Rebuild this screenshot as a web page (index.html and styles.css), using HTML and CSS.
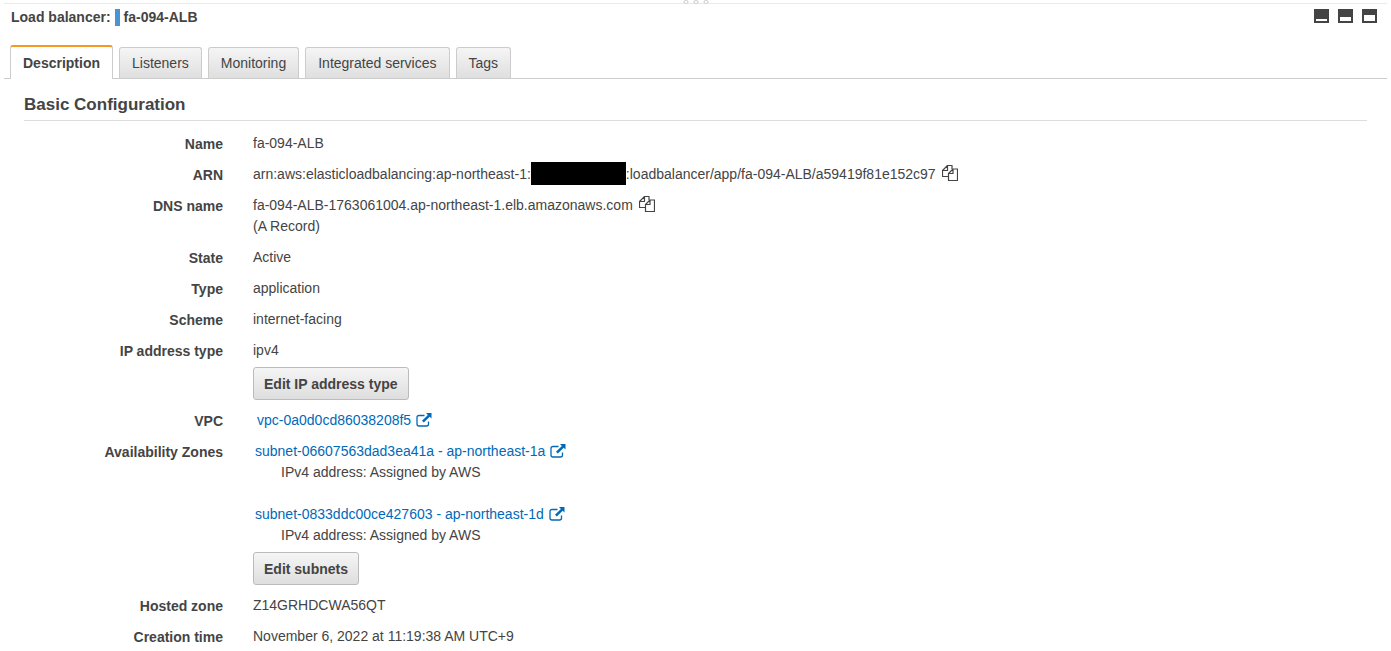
FILE: index.html
```html
<!DOCTYPE html>
<html lang="en">
<head>
<meta charset="utf-8">
<title>Load balancer: fa-094-ALB</title>
<link rel="stylesheet" href="styles.css">
</head>
<body>
<svg class="defs" aria-hidden="true">
  <symbol id="copy" viewBox="0 0 16 16">
    <path d="M6 11.500H.5V5.500l5-5h4.500v3.500M.5 5.500h5V.5" fill="none" stroke="currentColor" stroke-width="1.200" stroke-linejoin="round"/>
    <path d="M6.500 15.500V8.500L11 4h4.500v11.500zM6.500 8.500H11V4" fill="#fff" stroke="currentColor" stroke-width="1.200" stroke-linejoin="round"/>
  </symbol>
  <symbol id="external" viewBox="0 0 16 14">
    <path d="M8.500 2.500H3Q1 2.500 1 4.500v6.500q0 2 2 2h7.500q2 0 2-2V8.500" fill="none" stroke="currentColor" stroke-width="1.300"/>
    <path d="M10 0h5.500v5.500l-1.800-1.800-5.900 5.900-1.800-1.800 5.900-5.900z" fill="currentColor"/>
  </symbol>
</svg>
<main class="pane">
  <div class="splitter"><span class="grip"><i></i><i></i><i></i></span></div>
  <header class="header">
    <h1 class="name">Load balancer: <span class="marker"></span> fa-094-ALB</h1>
    <div class="sizes">
      <button class="size" aria-label="Small pane"><span class="fill small"></span></button>
      <button class="size" aria-label="Medium pane"><span class="fill medium"></span></button>
      <button class="size" aria-label="Large pane"><span class="fill large"></span></button>
    </div>
  </header>
  <nav class="tabs" role="tablist">
    <button class="tab active" role="tab" aria-selected="true">Description</button>
    <button class="tab" role="tab">Listeners</button>
    <button class="tab" role="tab">Monitoring</button>
    <button class="tab" role="tab">Integrated services</button>
    <button class="tab" role="tab">Tags</button>
  </nav>
  <section class="content">
    <h2 class="title">Basic Configuration</h2>
    <dl class="details">
      <dt>Name</dt><dd>fa-094-ALB</dd>
      <dt>ARN</dt>
      <dd>arn:aws:elasticloadbalancing:ap-northeast-1:<span class="redacted"></span>:loadbalancer/app/fa-094-ALB/a59419f81e152c97<button class="copy" aria-label="Copy ARN"><svg class="copy-icon"><use href="#copy"/></svg></button></dd>
      <dt>DNS name</dt>
      <dd>fa-094-ALB-1763061004.ap-northeast-1.elb.amazonaws.com<button class="copy" aria-label="Copy DNS name"><svg class="copy-icon"><use href="#copy"/></svg></button><br>(A Record)</dd>
      <dt>State</dt><dd>Active</dd>
      <dt>Type</dt><dd>application</dd>
      <dt>Scheme</dt><dd>internet-facing</dd>
      <dt>IP address type</dt>
      <dd>ipv4<button class="action">Edit IP address type</button></dd>
      <dt>VPC</dt>
      <dd><a class="link vpc" href="#">vpc-0a0d0cd86038208f5<svg class="external"><use href="#external"/></svg></a></dd>
      <dt>Availability Zones</dt>
      <dd>
        <ul class="zones">
          <li><a class="link subnet" href="#">subnet-06607563dad3ea41a - ap-northeast-1a<svg class="external"><use href="#external"/></svg></a><p class="address">IPv4 address: Assigned by AWS</p></li>
          <li><a class="link subnet" href="#">subnet-0833ddc00ce427603 - ap-northeast-1d<svg class="external"><use href="#external"/></svg></a><p class="address">IPv4 address: Assigned by AWS</p></li>
        </ul>
        <button class="action">Edit subnets</button>
      </dd>
      <dt>Hosted zone</dt><dd>Z14GRHDCWA56QT</dd>
      <dt>Creation time</dt><dd>November 6, 2022 at 11:19:38 AM UTC+9</dd>
    </dl>
  </section>
</main>
</body>
</html>
```
FILE: styles.css
```css
* { box-sizing: border-box; }
body {
  margin: 0;
  background: #fff;
  color: #444;
  font: 14px/21px "Helvetica Neue", "Liberation Sans", Arial, sans-serif;
}
button { font: inherit; color: inherit; cursor: pointer; }
.defs { display: none; }
.pane { padding: 3px 4px 0; }
.splitter {
  position: relative;
  height: 1px;
  background: #eaeaea;
}
.grip {
  position: absolute;
  top: -3px;
  left: 50%;
  display: flex;
  gap: 5px;
  transform: translateX(-50%);
}
.grip i {
  width: 5px;
  height: 4px;
  border: 1px solid #c8c8c8;
  border-radius: 2px;
  background: #fff;
}
.header {
  display: flex;
  justify-content: space-between;
  padding: 2px 10px 0 7px;
}
.name {
  display: flex;
  align-items: center;
  gap: 4px;
  margin: 0;
  font-size: 14px;
  line-height: 22px;
}
.marker {
  width: 5px;
  height: 17px;
  background: #4b94cf;
}
.sizes {
  display: flex;
  gap: 9px;
  padding-top: 3px;
}
.size {
  display: flex;
  align-items: flex-end;
  width: 15px;
  height: 14px;
  padding: 2px;
  border: 0;
  background: #444;
}
.fill { width: 100%; background: #fff; }
.small { height: 2px; }
.medium { height: 4px; }
.large { height: 6px; }
.tabs {
  display: flex;
  align-items: flex-end;
  gap: 6px;
  margin-top: 17px;
  padding-left: 6px;
  border-bottom: 1px solid #ccc;
}
.tab {
  height: 31px;
  padding: 0 12px;
  border: 1px solid #ccc;
  border-bottom: 0;
  border-radius: 3px 3px 0 0;
  background: linear-gradient(#f5f5f5, #dfdfdf);
}
.active {
  height: 34px;
  margin-bottom: -1px;
  border-top: 2px solid #f7981f;
  background: #fff;
  font-weight: bold;
}
.content { padding: 15px 20px 0; }
.title {
  margin: 0;
  padding-bottom: 4px;
  border-bottom: 1px solid #ddd;
  font-size: 17px;
  line-height: 22px;
}
.details {
  display: grid;
  grid-template-columns: 199px 1fr;
  gap: 10px 30px;
  margin: 12px 0 0;
}
.details dt { padding-top: 1px; font-weight: bold; text-align: right; line-height: 20px; }
.details dd { margin: 0; }
.redacted {
  display: inline-block;
  width: 95px;
  height: 23px;
  margin: -4px 0;
  background: #000;
  vertical-align: -2px;
}
.copy {
  display: inline-block;
  height: 16px;
  margin-left: 6px;
  padding: 0;
  border: 0;
  background: none;
  vertical-align: -2px;
}
.copy-icon { display: block; width: 16px; height: 16px; }
.action {
  display: block;
  height: 33px;
  margin-top: 6px;
  padding: 2px 10px 0;
  border: 1px solid #bbb;
  border-radius: 3px;
  background: linear-gradient(#f5f5f5, #dedede);
  font-weight: bold;
}
.link { color: #0069b8; text-decoration: none; }
.vpc { margin-left: 4px; }
.subnet { margin-left: 2px; }
.external {
  width: 16px;
  height: 14px;
  margin-left: 5px;
  vertical-align: -2px;
}
.zones {
  display: grid;
  gap: 21px;
  margin: 0;
  padding: 0;
  list-style: none;
}
.address { margin: 0 0 0 28px; }
```
